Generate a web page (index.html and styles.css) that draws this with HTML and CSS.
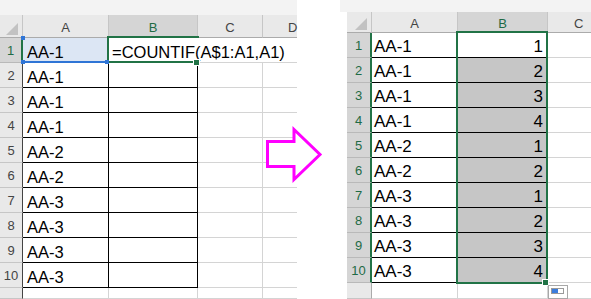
FILE: index.html
```html
<!DOCTYPE html>
<html lang="en">
<head>
    <meta charset="UTF-8">
    <title>COUNTIF running count</title>
    <link rel="stylesheet" href="styles.css">
</head>
<body>
<div class="page">

    <!-- before: formula typed in B1 -->
    <div class="sheet sheet-left">
        <div class="band"></div>
        <div class="grid grid-left">
            <div class="corner"></div>
            <div class="hd">A</div>
            <div class="hd sel">B</div>
            <div class="hd">C</div>
            <div class="hd cut hd-d">D</div>

            <div class="rh sel">1</div>
            <div class="c t ref">AA-1</div>
            <div class="c edit">=COUNTIF(A$1:A1,A1)</div>

            <div class="rh">2</div><div class="c t">AA-1</div><div class="c t"></div><div class="c"></div><div class="c cut"></div>
            <div class="rh">3</div><div class="c t">AA-1</div><div class="c t"></div><div class="c"></div><div class="c cut"></div>
            <div class="rh">4</div><div class="c t">AA-1</div><div class="c t"></div><div class="c"></div><div class="c cut"></div>
            <div class="rh">5</div><div class="c t">AA-2</div><div class="c t"></div><div class="c"></div><div class="c cut"></div>
            <div class="rh">6</div><div class="c t">AA-2</div><div class="c t"></div><div class="c"></div><div class="c cut"></div>
            <div class="rh">7</div><div class="c t">AA-3</div><div class="c t"></div><div class="c"></div><div class="c cut"></div>
            <div class="rh">8</div><div class="c t">AA-3</div><div class="c t"></div><div class="c"></div><div class="c cut"></div>
            <div class="rh">9</div><div class="c t">AA-3</div><div class="c t"></div><div class="c"></div><div class="c cut"></div>
            <div class="rh">10</div><div class="c t">AA-3</div><div class="c t"></div><div class="c"></div><div class="c cut"></div>
            <div class="rh"></div><div class="c"></div><div class="c"></div><div class="c"></div><div class="c cut"></div>
        </div>

        <div class="active"></div>
        <span class="fill-handle fh-left"></span>
        <span class="handle h-tl"></span>
        <span class="handle h-bl"></span>
        <span class="handle h-br"></span>
    </div>

    <div class="gap">
        <svg class="arrow" width="66" height="64" viewBox="0 0 66 64">
            <polygon points="5.5,18.5 32,18.5 32,6.5 58,31.5 32,56.5 32,43.5 5.5,43.5"
                     fill="#fff" stroke="#ff00ff" stroke-width="3"/>
        </svg>
    </div>

    <!-- after: formula filled down B1:B10 -->
    <div class="sheet sheet-right">
        <div class="band"></div>
        <div class="grid grid-right">
            <div class="corner"></div>
            <div class="hd">A</div>
            <div class="hd sel">B</div>
            <div class="hd cut hd-c">C</div>

            <div class="rh sel">1</div><div class="c t">AA-1</div><div class="c t num">1</div><div class="c cut"></div>
            <div class="rh sel">2</div><div class="c t">AA-1</div><div class="c t num fill">2</div><div class="c cut"></div>
            <div class="rh sel">3</div><div class="c t">AA-1</div><div class="c t num fill">3</div><div class="c cut"></div>
            <div class="rh sel">4</div><div class="c t">AA-1</div><div class="c t num fill">4</div><div class="c cut"></div>
            <div class="rh sel">5</div><div class="c t">AA-2</div><div class="c t num fill">1</div><div class="c cut"></div>
            <div class="rh sel">6</div><div class="c t">AA-2</div><div class="c t num fill">2</div><div class="c cut"></div>
            <div class="rh sel">7</div><div class="c t">AA-3</div><div class="c t num fill">1</div><div class="c cut"></div>
            <div class="rh sel">8</div><div class="c t">AA-3</div><div class="c t num fill">2</div><div class="c cut"></div>
            <div class="rh sel">9</div><div class="c t">AA-3</div><div class="c t num fill">3</div><div class="c cut"></div>
            <div class="rh sel">10</div><div class="c t">AA-3</div><div class="c t num fill">4</div><div class="c cut"></div>
            <div class="rh"></div><div class="c"></div><div class="c"></div><div class="c cut"></div>
        </div>

        <div class="range"></div>
        <span class="fill-handle fh-right"></span>
        <svg class="paste" width="20" height="14" viewBox="0 0 20 14">
            <rect x="0.5" y="0.5" width="19" height="13" fill="#fff" stroke="#a8a8a8"/>
            <rect x="3.5" y="3.5" width="12" height="5" fill="#fff" stroke="#9a9a9a"/>
            <rect x="4" y="4" width="6" height="4" fill="#3b7ddd"/>
        </svg>
    </div>

</div>
</body>
</html>
```

FILE: styles.css
```css
body {
    margin: 0;
    background: #fff;
    font-family: "Liberation Sans", Arial, sans-serif;
}
.page {
    display: flex;
    width: 591px;
    height: 299px;
    overflow: hidden;
}
.sheet {
    position: relative;
}
.sheet-left {
    width: 297px;
}
.sheet-right {
    width: 251px;
}
.gap {
    position: relative;
    width: 43px;
}
.band {
    height: 15px;
    background: #f3f3f3;
}
.sheet-right .band {
    height: 12px;
}

.grid {
    display: grid;
}
.grid > div {
    box-sizing: border-box;
    min-width: 0;
}
.grid-left {
    grid-template-columns: 23px 86px 89px 65px 34px;
    grid-template-rows: 23px repeat(10, 25px) 11px;
    font-size: 16.5px;
}
.grid-right {
    margin-left: 7px;
    grid-template-columns: 25px 86px 90px 43px;
    grid-template-rows: 21px repeat(10, 25px) 16px;
    font-size: 17px;
}

/* headers */
.corner {
    position: relative;
    background: #e9e9e9;
    border-right: 1px solid #c6c6c6;
    border-bottom: 1px solid #ababab;
}
.corner::after {
    content: "";
    position: absolute;
    right: 4px;
    bottom: 2px;
    width: 12px;
    height: 12px;
    background: #c2c2c2;
    clip-path: polygon(100% 0, 100% 100%, 0 100%);
}
.hd {
    display: flex;
    align-items: center;
    justify-content: center;
    padding-top: 3px;
    background: #e9e9e9;
    border-right: 1px solid #c6c6c6;
    border-bottom: 1px solid #ababab;
    font-size: 13px;
    color: #444;
}
.hd.sel {
    background: #d5d5d5;
    color: #1f6b45;
}
.hd-d {
    justify-content: flex-start;
    padding-left: 25px;
}
.hd-c {
    justify-content: flex-start;
    padding-left: 26px;
}
.rh {
    display: flex;
    align-items: center;
    justify-content: center;
    background: #e9e9e9;
    border-right: 1px solid #ababab;
    border-bottom: 1px solid #c6c6c6;
    font-size: 13px;
    color: #444;
}
.grid-left .rh {
    border-right-color: #444;
}
.grid-left .rh:last-of-type {
    border-right-color: #ababab;
}
.rh.sel,
.grid-left .rh.sel {
    background: #d5d5d5;
    color: #1f6b45;
    border-right: 2px solid #217346;
    border-bottom-color: #b9b9b9;
}

/* cells */
.c {
    display: flex;
    align-items: flex-end;
    padding: 0 4px 1px;
    line-height: 18px;
    white-space: nowrap;
    color: #000;
    border-right: 1px solid #d4d4d4;
    border-bottom: 1px solid #d4d4d4;
}
.grid-right .c {
    padding-left: 2px;
}
.c.t {
    border-color: #000;
}
.c.num {
    justify-content: flex-end;
    padding-right: 4px;
}
.c.fill {
    background: #c6c6c6;
}
.c.ref {
    padding-bottom: 0;
    background: #dce6f4;
    border-bottom: 2px solid #2f75d6;
}
.c.edit {
    grid-column: span 3;
    padding-left: 3px;
    border-right: none;
    overflow: visible;
}
.c.cut,
.hd.cut {
    border-right: none;
}

/* selection marks */
.active {
    position: absolute;
    left: 107px;
    top: 36px;
    width: 92px;
    height: 27px;
    box-sizing: border-box;
    border: 2px solid #217346;
    border-right: none;
}
.range {
    position: absolute;
    left: 116px;
    top: 31px;
    width: 92px;
    height: 253px;
    box-sizing: border-box;
    border: 2px solid #217346;
}
.fill-handle {
    position: absolute;
    width: 5px;
    height: 5px;
    background: #217346;
    box-shadow: 0 0 0 1px #fff;
}
.fh-left {
    left: 194px;
    top: 60px;
}
.fh-right {
    left: 203px;
    top: 280px;
}
.handle {
    position: absolute;
    width: 4px;
    height: 4px;
    background: #2f75d6;
}
.h-tl {
    left: 21px;
    top: 36px;
}
.h-bl {
    left: 21px;
    top: 60px;
}
.h-br {
    left: 105px;
    top: 60px;
}
.paste {
    position: absolute;
    left: 208px;
    top: 285px;
}
.arrow {
    position: absolute;
    left: -35px;
    top: 123px;
}
```
